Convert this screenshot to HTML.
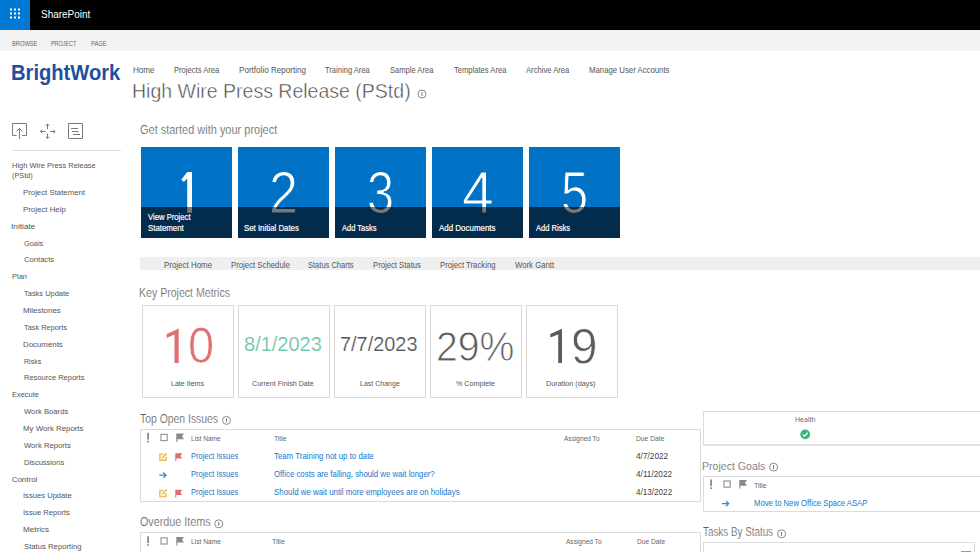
<!DOCTYPE html>
<html><head><meta charset="utf-8">
<style>
*{margin:0;padding:0;box-sizing:border-box}
html,body{width:980px;height:552px;overflow:hidden;background:#fff;font-family:"Liberation Sans",sans-serif;color:#444}
.a{position:absolute;white-space:nowrap;line-height:1;transform-origin:0 0}
.r{position:absolute}
.tile{position:absolute;top:147px;width:91px;height:91px;background:#0072c6;overflow:hidden}
.band{position:absolute;left:0;top:60px;width:91px;height:31px;background:#022b4c;overflow:hidden}
.box{position:absolute;top:305px;width:92px;height:93px;border:1px solid #d9d9d9}
.tbl{position:absolute;border:1px solid #dcdcdc}
</style></head><body>
<div class="r" style="left:0;top:0;width:980px;height:30px;background:#000"></div>
<div class="r" style="left:0;top:0;width:30px;height:30px;background:#0078d4"></div>
<div class="r" style="left:0;top:30px;width:980px;height:21px;background:#f3f3f3"></div>

<div class="r" style="left:12px;top:150px;width:109px;height:1px;background:#dedede"></div>

<div class="tile" style="left:141px"><svg class="r" style="left:0;top:0" width="91" height="91"><polygon fill="#fff" points="46.2,24.9 51.0,24.9 51.0,65.8 46.2,65.8 46.2,31.6 42.7,35.0 40.4,32.4"/></svg><div class="band"><svg class="r" style="left:0;top:0" width="91" height="91"><polygon fill="#7a7775" points="46.2,-35.1 51.0,-35.1 51.0,5.8 46.2,5.8 46.2,-28.4 42.7,-25.0 40.4,-27.6"/></svg></div></div>
<div class="tile" style="left:238px"><div class="a" style="left:31.09px;top:13px;font-size:58.57px;line-height:65px;transform:scaleX(0.891);color:#fff;-webkit-text-stroke:1.1px #0072c6">2</div><div class="band"><div class="a" style="left:31.09px;top:-47px;font-size:58.57px;line-height:65px;transform:scaleX(0.891);color:#7a7775;-webkit-text-stroke:1.1px #022b4c">2</div></div></div>
<div class="tile" style="left:335px"><div class="a" style="left:32.29px;top:13px;font-size:58.57px;line-height:65px;transform:scaleX(0.832);color:#fff;-webkit-text-stroke:1.1px #0072c6">3</div><div class="band"><div class="a" style="left:32.29px;top:-47px;font-size:58.57px;line-height:65px;transform:scaleX(0.832);color:#7a7775;-webkit-text-stroke:1.1px #022b4c">3</div></div></div>
<div class="tile" style="left:432px"><div class="a" style="left:29.66px;top:12px;font-size:59.42px;line-height:67px;transform:scaleX(0.960);color:#fff;-webkit-text-stroke:1.1px #0072c6">4</div><div class="band"><div class="a" style="left:29.66px;top:-48px;font-size:59.42px;line-height:67px;transform:scaleX(0.960);color:#7a7775;-webkit-text-stroke:1.1px #022b4c">4</div></div></div>
<div class="tile" style="left:529px"><div class="a" style="left:31.95px;top:12px;font-size:59.42px;line-height:67px;transform:scaleX(0.822);color:#fff;-webkit-text-stroke:1.1px #0072c6">5</div><div class="band"><div class="a" style="left:31.95px;top:-48px;font-size:59.42px;line-height:67px;transform:scaleX(0.822);color:#7a7775;-webkit-text-stroke:1.1px #022b4c">5</div></div></div>

<div class="r" style="left:140px;top:257px;width:840px;height:13px;background:#efefef"></div>

<div class="box" style="left:142px"></div>
<div class="box" style="left:238px"></div>
<div class="box" style="left:334px"></div>
<div class="box" style="left:430px"></div>
<div class="box" style="left:526px"></div>

<div class="tbl" style="left:140px;top:429px;width:561px;height:73px"></div>
<div class="tbl" style="left:140px;top:532px;width:561px;height:40px"></div>
<div class="tbl" style="left:703px;top:411px;width:300px;height:35px;border-bottom:2px solid #e3e3e3"></div>
<div class="tbl" style="left:703px;top:476px;width:300px;height:36px"></div>
<div class="tbl" style="left:703px;top:542px;width:272px;height:30px"></div>
<div class="r" style="left:961px;top:551px;width:10px;height:1px;background:#999"></div>

<div class="a" style="left:40.95px;top:8px;font-size:11.01px;line-height:12px;color:#fff;transform:scaleX(0.906)">SharePoint</div>
<div class="a" style="left:11.64px;top:39px;font-size:7.39px;line-height:9px;color:#666;transform:scaleX(0.776)">BROWSE</div>
<div class="a" style="left:51.27px;top:39px;font-size:7.39px;line-height:9px;color:#666;transform:scaleX(0.732)">PROJECT</div>
<div class="a" style="left:90.94px;top:39px;font-size:7.39px;line-height:9px;color:#666;transform:scaleX(0.786)">PAGE</div>
<div class="a" style="left:10.99px;top:60px;font-size:22.45px;line-height:25px;color:#1f4f9c;font-weight:bold;transform:scaleX(0.898)">BrightWork</div>
<div class="a" style="left:133.45px;top:65px;font-size:8.55px;line-height:10px;color:#555;transform:scaleX(0.946)">Home</div>
<div class="a" style="left:174.09px;top:65px;font-size:8.55px;line-height:10px;color:#555;transform:scaleX(0.890)">Projects Area</div>
<div class="a" style="left:238.85px;top:65px;font-size:8.55px;line-height:10px;color:#555;transform:scaleX(0.947)">Portfolio Reporting</div>
<div class="a" style="left:325.25px;top:65px;font-size:8.55px;line-height:10px;color:#555;transform:scaleX(0.887)">Training Area</div>
<div class="a" style="left:389.96px;top:65px;font-size:8.55px;line-height:10px;color:#555;transform:scaleX(0.886)">Sample Area</div>
<div class="a" style="left:453.95px;top:65px;font-size:8.55px;line-height:10px;color:#555;transform:scaleX(0.889)">Templates Area</div>
<div class="a" style="left:526.20px;top:65px;font-size:8.55px;line-height:10px;color:#555;transform:scaleX(0.894)">Archive Area</div>
<div class="a" style="left:589.18px;top:65px;font-size:8.55px;line-height:10px;color:#555;transform:scaleX(0.911)">Manage User Accounts</div>
<div class="a" style="left:132.24px;top:79px;font-size:21.01px;line-height:23px;color:#444;transform:scaleX(0.929);-webkit-text-stroke:0.5px #fff">High Wire Press Release (PStd)</div>
<div class="a" style="left:11.50px;top:161px;font-size:7.97px;line-height:9px;color:#555;transform:scaleX(0.941)">High Wire Press Release</div>
<div class="a" style="left:11.66px;top:171px;font-size:7.97px;line-height:9px;color:#555;transform:scaleX(0.915)">(PStd)</div>
<div class="a" style="left:23.48px;top:188px;font-size:7.97px;line-height:9px;color:#555;transform:scaleX(0.979)">Project Statement</div>
<div class="a" style="left:23.47px;top:205px;font-size:7.97px;line-height:9px;color:#555;transform:scaleX(0.987)">Project Help</div>
<div class="a" style="left:11.35px;top:222px;font-size:7.97px;line-height:9px;color:#555;transform:scaleX(1.043)">Initiate</div>
<div class="a" style="left:23.73px;top:239px;font-size:7.97px;line-height:9px;color:#555;transform:scaleX(0.928)">Goals</div>
<div class="a" style="left:23.72px;top:255px;font-size:7.97px;line-height:9px;color:#555;transform:scaleX(0.958)">Contacts</div>
<div class="a" style="left:11.50px;top:272px;font-size:7.97px;line-height:9px;color:#555;transform:scaleX(0.944)">Plan</div>
<div class="a" style="left:23.95px;top:289px;font-size:7.97px;line-height:9px;color:#555;transform:scaleX(0.937)">Tasks Update</div>
<div class="a" style="left:23.47px;top:306px;font-size:7.97px;line-height:9px;color:#555;transform:scaleX(0.990)">Milestones</div>
<div class="a" style="left:23.95px;top:323px;font-size:7.97px;line-height:9px;color:#555;transform:scaleX(0.925)">Task Reports</div>
<div class="a" style="left:23.47px;top:340px;font-size:7.97px;line-height:9px;color:#555;transform:scaleX(0.987)">Documents</div>
<div class="a" style="left:23.53px;top:357px;font-size:7.97px;line-height:9px;color:#555;transform:scaleX(0.889)">Risks</div>
<div class="a" style="left:23.50px;top:373px;font-size:7.97px;line-height:9px;color:#555;transform:scaleX(0.941)">Resource Reports</div>
<div class="a" style="left:11.50px;top:390px;font-size:7.97px;line-height:9px;color:#555;transform:scaleX(0.934)">Execute</div>
<div class="a" style="left:24.10px;top:407px;font-size:7.97px;line-height:9px;color:#555;transform:scaleX(0.964)">Work Boards</div>
<div class="a" style="left:23.47px;top:424px;font-size:7.97px;line-height:9px;color:#555;transform:scaleX(0.985)">My Work Reports</div>
<div class="a" style="left:24.10px;top:441px;font-size:7.97px;line-height:9px;color:#555;transform:scaleX(0.963)">Work Reports</div>
<div class="a" style="left:23.50px;top:458px;font-size:7.97px;line-height:9px;color:#555;transform:scaleX(0.945)">Discussions</div>
<div class="a" style="left:11.70px;top:475px;font-size:7.97px;line-height:9px;color:#555">Control</div>
<div class="a" style="left:23.41px;top:491px;font-size:7.97px;line-height:9px;color:#555;transform:scaleX(0.956)">Issues Update</div>
<div class="a" style="left:23.42px;top:508px;font-size:7.97px;line-height:9px;color:#555;transform:scaleX(0.953)">Issue Reports</div>
<div class="a" style="left:23.45px;top:525px;font-size:7.97px;line-height:9px;color:#555;transform:scaleX(1.017)">Metrics</div>
<div class="a" style="left:23.75px;top:542px;font-size:7.97px;line-height:9px;color:#555;transform:scaleX(0.969)">Status Reporting</div>
<div class="a" style="left:139.85px;top:122px;font-size:13.19px;line-height:15px;color:#5e5e5e;transform:scaleX(0.832);-webkit-text-stroke:0.2px #fff">Get started with your project</div>
<div class="a" style="left:148.00px;top:212px;font-size:8.55px;line-height:10px;color:#fff;transform:scaleX(0.898);-webkit-text-stroke:0.2px #fff">View Project</div>
<div class="a" style="left:147.65px;top:223px;font-size:8.55px;line-height:10px;color:#fff;transform:scaleX(0.918);-webkit-text-stroke:0.2px #fff">Statement</div>
<div class="a" style="left:244.45px;top:223px;font-size:8.55px;line-height:10px;color:#fff;transform:scaleX(0.917);-webkit-text-stroke:0.2px #fff">Set Initial Dates</div>
<div class="a" style="left:341.70px;top:223px;font-size:8.55px;line-height:10px;color:#fff;transform:scaleX(0.876);-webkit-text-stroke:0.2px #fff">Add Tasks</div>
<div class="a" style="left:438.70px;top:223px;font-size:8.55px;line-height:10px;color:#fff;transform:scaleX(0.930);-webkit-text-stroke:0.2px #fff">Add Documents</div>
<div class="a" style="left:535.70px;top:223px;font-size:8.55px;line-height:10px;color:#fff;transform:scaleX(0.888);-webkit-text-stroke:0.2px #fff">Add Risks</div>
<div class="a" style="left:163.96px;top:260px;font-size:8.70px;line-height:10px;color:#555;transform:scaleX(0.914)">Project Home</div>
<div class="a" style="left:231.08px;top:260px;font-size:8.70px;line-height:10px;color:#555;transform:scaleX(0.895)">Project Schedule</div>
<div class="a" style="left:308.46px;top:260px;font-size:8.70px;line-height:10px;color:#555;transform:scaleX(0.866)">Status Charts</div>
<div class="a" style="left:373.38px;top:260px;font-size:8.70px;line-height:10px;color:#555;transform:scaleX(0.886)">Project Status</div>
<div class="a" style="left:440.48px;top:260px;font-size:8.70px;line-height:10px;color:#555;transform:scaleX(0.891)">Project Tracking</div>
<div class="a" style="left:515.40px;top:260px;font-size:8.70px;line-height:10px;color:#555;transform:scaleX(0.895)">Work Gantt</div>
<div class="a" style="left:139.25px;top:286px;font-size:12.32px;line-height:14px;color:#5e5e5e;transform:scaleX(0.858);-webkit-text-stroke:0.2px #fff">Key Project Metrics</div>
<div class="a" style="left:187.75px;top:318px;font-size:49.57px;line-height:56px;color:#e07172;transform:scaleX(0.948);-webkit-text-stroke:0.7px #fff">0</div>
<div class="a" style="left:244.20px;top:333px;font-size:20.14px;line-height:22px;color:#6cc3a3;transform:scaleX(0.994);-webkit-text-stroke:0.2px #fff">8/1/2023</div>
<div class="a" style="left:340.00px;top:332px;font-size:21.00px;line-height:23px;color:#555;transform:scaleX(0.948);-webkit-text-stroke:0.2px #fff">7/7/2023</div>
<div class="a" style="left:435.94px;top:322px;font-size:43.14px;line-height:48px;color:#5c5c5c;transform:scaleX(0.909);-webkit-text-stroke:0.9px #fff">29%</div>
<div class="a" style="left:570.85px;top:318px;font-size:50.29px;line-height:57px;color:#5c5c5c;transform:scaleX(0.949);-webkit-text-stroke:0.8px #fff">9</div>
<div class="a" style="left:171.33px;top:379px;font-size:7.54px;line-height:9px;color:#555;transform:scaleX(0.938)">Late Items</div>
<div class="a" style="left:252.44px;top:379px;font-size:7.54px;line-height:9px;color:#555;transform:scaleX(0.945)">Current Finish Date</div>
<div class="a" style="left:359.54px;top:379px;font-size:7.54px;line-height:9px;color:#555;transform:scaleX(0.932)">Last Change</div>
<div class="a" style="left:455.85px;top:379px;font-size:7.54px;line-height:9px;color:#555;transform:scaleX(0.951)">% Complete</div>
<div class="a" style="left:546.32px;top:379px;font-size:7.54px;line-height:9px;color:#555;transform:scaleX(0.961)">Duration (days)</div>
<div class="a" style="left:139.89px;top:412px;font-size:12.32px;line-height:14px;color:#5e5e5e;transform:scaleX(0.845);-webkit-text-stroke:0.2px #fff">Top Open Issues</div>
<div class="a" style="left:190.77px;top:435px;font-size:6.96px;line-height:7px;color:#666;transform:scaleX(0.952)">List Name</div>
<div class="a" style="left:274.26px;top:435px;font-size:6.96px;line-height:7px;color:#666;transform:scaleX(0.971)">Title</div>
<div class="a" style="left:563.90px;top:435px;font-size:6.96px;line-height:7px;color:#666;transform:scaleX(0.941)">Assigned To</div>
<div class="a" style="left:636.16px;top:435px;font-size:6.96px;line-height:7px;color:#666;transform:scaleX(0.967)">Due Date</div>
<div class="a" style="left:191.00px;top:451px;font-size:8.84px;line-height:10px;color:#1a76c6;transform:scaleX(0.851)">Project Issues</div>
<div class="a" style="left:274.34px;top:451px;font-size:8.84px;line-height:10px;color:#1a76c6;transform:scaleX(0.891)">Team Training not up to date</div>
<div class="a" style="left:636.23px;top:451px;font-size:9.00px;line-height:10px;color:#444;transform:scaleX(0.918)">4/7/2022</div>
<div class="a" style="left:191.00px;top:469px;font-size:8.84px;line-height:10px;color:#1a76c6;transform:scaleX(0.851)">Project Issues</div>
<div class="a" style="left:274.15px;top:469px;font-size:8.84px;line-height:10px;color:#1a76c6;transform:scaleX(0.886)">Office costs are falling, should we wait longer?</div>
<div class="a" style="left:636.23px;top:469px;font-size:9.00px;line-height:10px;color:#444;transform:scaleX(0.918)">4/11/2022</div>
<div class="a" style="left:191.00px;top:487px;font-size:8.84px;line-height:10px;color:#1a76c6;transform:scaleX(0.851)">Project Issues</div>
<div class="a" style="left:274.14px;top:487px;font-size:8.84px;line-height:10px;color:#1a76c6;transform:scaleX(0.892)">Should we wait until more employees are on holidays</div>
<div class="a" style="left:636.24px;top:487px;font-size:9.00px;line-height:10px;color:#444;transform:scaleX(0.903)">4/13/2022</div>
<div class="a" style="left:139.62px;top:515px;font-size:12.17px;line-height:14px;color:#5e5e5e;transform:scaleX(0.885);-webkit-text-stroke:0.2px #fff">Overdue Items</div>
<div class="a" style="left:190.67px;top:538px;font-size:6.96px;line-height:7px;color:#666;transform:scaleX(0.955)">List Name</div>
<div class="a" style="left:272.36px;top:538px;font-size:6.96px;line-height:7px;color:#666;transform:scaleX(0.987)">Title</div>
<div class="a" style="left:566.10px;top:538px;font-size:6.96px;line-height:7px;color:#666;transform:scaleX(0.941)">Assigned To</div>
<div class="a" style="left:637.37px;top:538px;font-size:6.96px;line-height:7px;color:#666;transform:scaleX(0.956)">Due Date</div>
<div class="a" style="left:795.44px;top:416px;font-size:6.38px;line-height:7px;color:#6a6a6a;transform:scaleX(1.101)">Health</div>
<div class="a" style="left:702.25px;top:460px;font-size:11.30px;line-height:12px;color:#5e5e5e;transform:scaleX(0.935);-webkit-text-stroke:0.2px #fff">Project Goals</div>
<div class="a" style="left:754.16px;top:482px;font-size:6.96px;line-height:7px;color:#666;transform:scaleX(0.979)">Title</div>
<div class="a" style="left:754.08px;top:498px;font-size:8.84px;line-height:10px;color:#1a76c6;transform:scaleX(0.873)">Move to New Office Space ASAP</div>
<div class="a" style="left:702.90px;top:525px;font-size:12.17px;line-height:14px;color:#5e5e5e;transform:scaleX(0.810);-webkit-text-stroke:0.2px #fff">Tasks By Status</div>
<svg class="r" style="left:0;top:0" width="980" height="552"><polygon fill="#e07172" points="178.7,328.4 178.7,363 174.5,363 174.5,334.5 166.7,337.9 166.7,334.1"/><polygon fill="#5c5c5c" points="562,328.8 562,363 558.2,363 558.2,334.6 550.3,337.6 550.3,333.9"/></svg>

<svg class="r" style="left:0;top:0" width="980" height="552" viewBox="0 0 980 552">
 <g fill="#fff">
  <rect x="10" y="8.5" width="2" height="2"/><rect x="14" y="8.5" width="2" height="2"/><rect x="18" y="8.5" width="2" height="2"/>
  <rect x="10" y="12.5" width="2" height="2"/><rect x="14" y="12.5" width="2" height="2"/><rect x="18" y="12.5" width="2" height="2"/>
  <rect x="10" y="16.5" width="2" height="2"/><rect x="14" y="16.5" width="2" height="2"/><rect x="18" y="16.5" width="2" height="2"/>
 </g>
 <g fill="none" stroke="#7a7a7a" stroke-width="1">
  <path d="M16.5 135.5H12.5V123.5H26.5V135.5H22"/>
  <path d="M19.5 128.5V139M16.5 131.5L19.5 128.5L22.5 131.5"/>
  <path d="M47.5 124V129M45.7 125.8L47.5 124L49.3 125.8"/>
  <path d="M47.5 133.5V138.5M45.7 136.7L47.5 138.5L49.3 136.7"/>
  <path d="M40.5 131.5H45.5M42.3 129.7L40.5 131.5L42.3 133.3"/>
  <path d="M50 131.5H55M53.2 129.7L55 131.5L53.2 133.3"/>
  <path d="M68.5 123.5H82.5V138.5H68.5Z"/>
  <path d="M71 128.5H78M72 131.5H78.5M73 134.5H80"/>
 </g>
 <!-- info icons -->
 <g fill="none" stroke="#8a8a8a" stroke-width="1">
  <circle cx="422" cy="94" r="4"/>
  <circle cx="226.5" cy="420.4" r="4"/>
  <circle cx="218.8" cy="523.8" r="4"/>
  <circle cx="773.6" cy="467.1" r="4"/>
  <circle cx="781.6" cy="533.8" r="4"/>
 </g>
 <g fill="#777">
  <rect x="421.5" y="92" width="1" height="4"/>
  <rect x="226" y="418.4" width="1" height="4"/>
  <rect x="218.3" y="521.8" width="1" height="4"/>
  <rect x="773.1" y="465.1" width="1" height="4"/>
  <rect x="781.1" y="531.8" width="1" height="4"/>
 </g>
 <!-- table header icons -->
 <g>
  <rect x="147.2" y="432.8" width="1.8" height="6.8" fill="#8a8a8a"/>
  <rect x="147.2" y="440.8" width="1.8" height="1.6" fill="#8a8a8a"/>
  <rect x="161" y="434.4" width="6.2" height="6.2" fill="none" stroke="#999" stroke-width="1.2"/>
  <path d="M176.3 433.5H184L182 436.3L184 439.2H177.4V442H176.3Z" fill="#8a8a8a"/>
 </g>
 <g transform="translate(0,103.4)">
  <rect x="147.2" y="432.8" width="1.8" height="6.8" fill="#8a8a8a"/>
  <rect x="147.2" y="440.8" width="1.8" height="1.6" fill="#8a8a8a"/>
  <rect x="161" y="434.4" width="6.2" height="6.2" fill="none" stroke="#999" stroke-width="1.2"/>
  <path d="M176.3 433.5H184L182 436.3L184 439.2H177.4V442H176.3Z" fill="#8a8a8a"/>
 </g>
 <g transform="translate(563,46.6)">
  <rect x="147.2" y="432.8" width="1.8" height="6.8" fill="#8a8a8a"/>
  <rect x="147.2" y="440.8" width="1.8" height="1.6" fill="#8a8a8a"/>
  <rect x="161" y="434.4" width="6.2" height="6.2" fill="none" stroke="#999" stroke-width="1.2"/>
  <path d="M176.3 433.5H184L182 436.3L184 439.2H177.4V442H176.3Z" fill="#8a8a8a"/>
 </g>
 <!-- row icons -->
 <g>
  <path d="M163.5 454.2H159.9V460.3H166V457" fill="none" stroke="#e8c160" stroke-width="1.5"/>
  <path d="M161.6 458.7L162 457L166.2 452.8L167.4 454L163.3 458.2Z" fill="#e8c160"/>
 </g>
 <g transform="translate(0,36.3)">
  <path d="M163.5 454.2H159.9V460.3H166V457" fill="none" stroke="#e8c160" stroke-width="1.5"/>
  <path d="M161.6 458.7L162 457L166.2 452.8L167.4 454L163.3 458.2Z" fill="#e8c160"/>
 </g>
 <g>
  <path d="M175.3 453.3H182.2L180.5 456L182.2 458.6H176.3V461H175.3Z" fill="#e36c6f"/>
 </g>
 <g transform="translate(0,36.5)">
  <path d="M175.3 453.3H182.2L180.5 456L182.2 458.6H176.3V461H175.3Z" fill="#e36c6f"/>
 </g>
 <g fill="none" stroke="#3189d6" stroke-width="1.25">
  <path d="M159.3 475.2H166M163.3 472.5L166 475.2L163.3 477.9"/>
 </g>
 <g transform="translate(562.7,28.4)" fill="none" stroke="#3189d6" stroke-width="1.25">
  <path d="M159.3 475.2H166M163.3 472.5L166 475.2L163.3 477.9"/>
 </g>
 <!-- health -->
 <circle cx="805.2" cy="434.4" r="4.9" fill="#3bb57a"/>
 <path d="M802.8 434.6L804.5 436.2L807.7 432.8" fill="none" stroke="#fff" stroke-width="1.3"/>
</svg>
</body></html>
